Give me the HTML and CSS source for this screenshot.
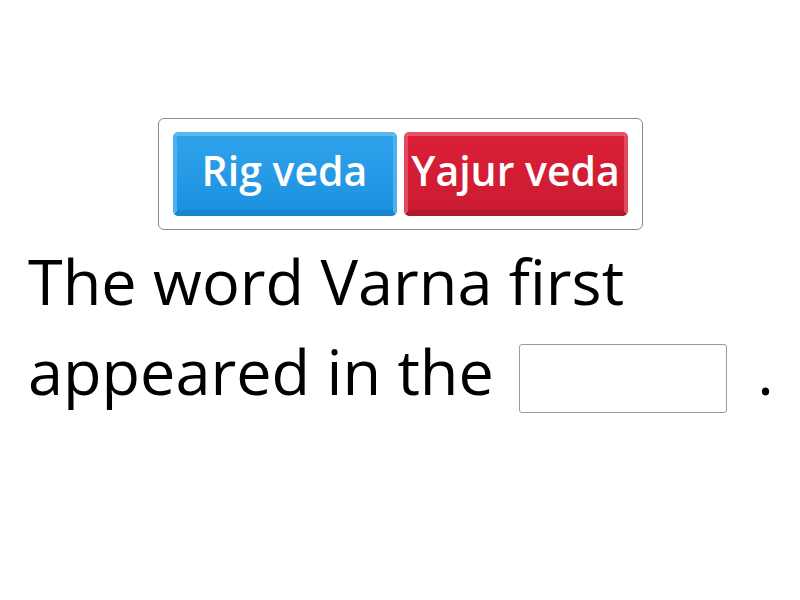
FILE: index.html
```html
<!DOCTYPE html>
<html>
<head>
<meta charset="utf-8">
<link rel="stylesheet" href="styles.css">
</head>
<body>
<div class="page">
  <div class="choices">
    <div class="tile tile-blue">Rig veda</div>
    <div class="tile tile-red">Yajur veda</div>
  </div>
  <div class="sentence">
    <div class="line">The word Varna first</div>
    <div class="line">appeared in the <span class="blank"></span><span class="dot">.</span></div>
  </div>
</div>
</body>
</html>
```
FILE: styles.css
```css
html, body {
  margin: 0;
  padding: 0;
  background: #ffffff;
}
.page {
  width: 800px;
  height: 600px;
  font-family: "Open Sans", "DejaVu Sans", sans-serif;
  color: #000;
  padding-top: 118px;
  box-sizing: border-box;
}
.choices {
  display: flex;
  gap: 7px;
  width: 455px;
  margin: 0 auto;
  padding: 13px 14px 13px 14px;
  border: 1px solid #8a8a8a;
  border-radius: 6px;
}
.tile {
  width: 224px;
  height: 84px;
  box-sizing: border-box;
  border-radius: 5px;
  color: #fff;
  font-weight: 600;
  font-size: 41px;
  display: flex;
  align-items: center;
  justify-content: center;
  white-space: nowrap;
  overflow: hidden;
  padding-bottom: 7px;
  border-style: solid;
  border-width: 4px 4px 6px 4px;
}
.tile-blue {
  background: linear-gradient(#2fa2ec, #1c92df);
  border-color: #5cb6f0 #4fb0ef #1785cf #4fb0ef;
}
.tile-red {
  background: linear-gradient(#da1f37, #cc1c31);
  border-color: #e5526a #e24a60 #b01a2b #e24a60;
}
.sentence {
  padding-left: 28px;
  margin-top: 6px;
  font-size: 63px;
}
.line {
  height: 90px;
  line-height: 90px;
  white-space: nowrap;
}
.blank {
  display: inline-block;
  width: 206px;
  height: 67px;
  border: 1px solid #9a9a9a;
  border-radius: 3px;
  vertical-align: -18px;
  margin-left: 9px;
  margin-right: 30px;
}
```
